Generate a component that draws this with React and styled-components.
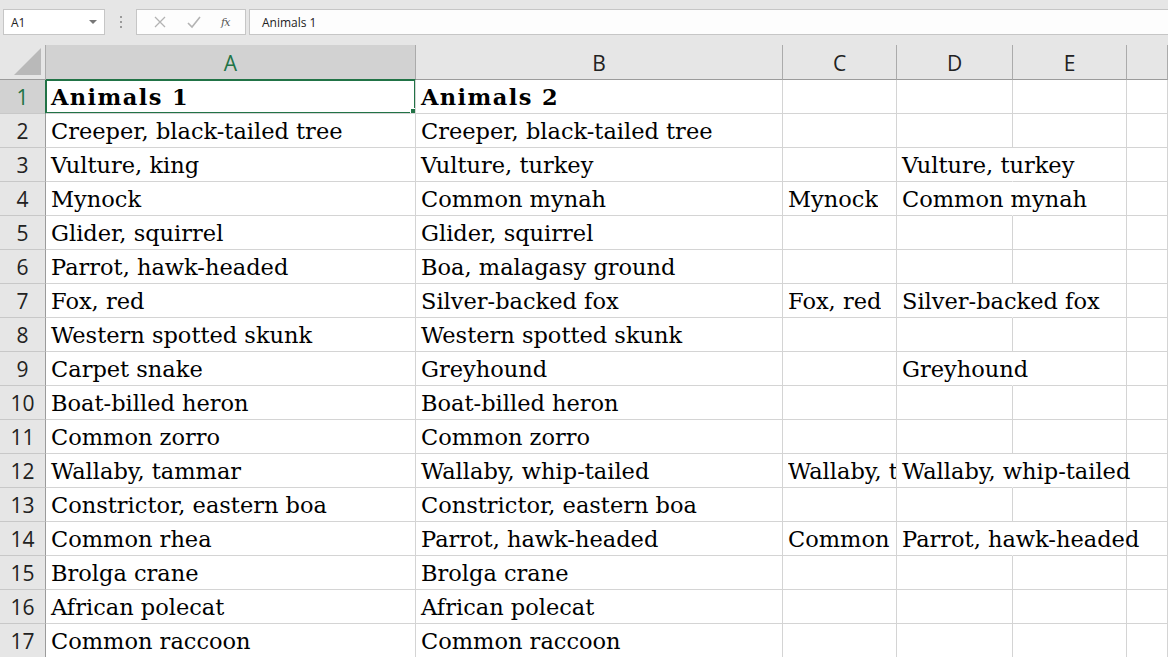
import React from 'react'
import styled, { createGlobalStyle } from 'styled-components'

const Global = createGlobalStyle`
  html, body { margin: 0; padding: 0; background: #ffffff; overflow: hidden; }
  * { box-sizing: border-box; }
`

const COLS = '46px 370px 367px 114px 116px 114px 1fr'
const UI_FONT = `"Open Sans", "Noto Sans", "DejaVu Sans", sans-serif`
const CELL_FONT = `"DejaVu Serif", "Liberation Serif", serif`

const Page = styled.div`
  width: 1168px;
  height: 657px;
  display: flex;
  flex-direction: column;
  overflow: hidden;
`

const Toolbar = styled.div`
  height: 45px;
  flex: none;
  display: flex;
  align-items: flex-start;
  padding: 9px 0 0 3px;
  background: #e6e6e6;
`

const NameBox = styled.div`
  width: 102px;
  height: 26px;
  display: flex;
  align-items: center;
  justify-content: space-between;
  padding: 0 7px 0 7px;
  background: #ffffff;
  border: 1px solid #c6c6c6;
  font-family: ${UI_FONT};
  font-size: 12px;
  color: #222;
`

const Caret = styled.span`
  width: 0;
  height: 0;
  border-left: 4px solid transparent;
  border-right: 4px solid transparent;
  border-top: 4px solid #777;
`

const Grip = styled.div`
  width: 31px;
  height: 26px;
  display: flex;
  flex-direction: column;
  align-items: center;
  justify-content: center;
  gap: 3px;
  span {
    width: 2px;
    height: 2px;
    background: #9a9a9a;
  }
`

const FxGroup = styled.div`
  width: 110px;
  height: 26px;
  display: flex;
  align-items: center;
  justify-content: space-around;
  padding: 0 6px;
  background: #fdfdfd;
  border: 1px solid #c6c6c6;
`

const Fx = styled.span`
  font-family: "DejaVu Serif", serif;
  font-style: italic;
  font-size: 11px;
  color: #555;
  letter-spacing: -1px;
`

const FormulaInput = styled.div`
  flex: 1;
  height: 26px;
  margin-left: 3px;
  display: flex;
  align-items: center;
  padding-left: 12px;
  background: #fdfdfd;
  border: 1px solid #c6c6c6;
  border-right: none;
  font-family: ${UI_FONT};
  font-size: 12px;
  color: #222;
`

const Sheet = styled.div`
  display: flex;
  flex-direction: column;
`

const Row = styled.div`
  display: grid;
  grid-template-columns: ${COLS};
  height: ${p => p.$h}px;
`

const Corner = styled.div`
  position: relative;
  background: #e6e6e6;
  border-right: 1px solid #ababab;
  border-bottom: 1px solid #9b9b9b;
  &::after {
    content: '';
    position: absolute;
    right: 4px;
    bottom: 4px;
    border-left: 27px solid transparent;
    border-bottom: 27px solid #b9b9b9;
  }
`

const ColHead = styled.div`
  display: flex;
  align-items: center;
  justify-content: center;
  padding-top: 1px;
  background: ${p => (p.$active ? '#d2d2d2' : '#e6e6e6')};
  color: ${p => (p.$active ? '#217346' : '#222')};
  border-right: 1px solid #ababab;
  border-bottom: 1px solid ${p => (p.$active ? '#217346' : '#9b9b9b')};
  font-family: ${UI_FONT};
  font-size: 21px;
`

const RowHead = styled.div`
  display: flex;
  align-items: center;
  justify-content: center;
  background: ${p => (p.$active ? '#d2d2d2' : '#e6e6e6')};
  color: ${p => (p.$active ? '#217346' : '#222')};
  border-right: 1px solid ${p => (p.$active ? '#217346' : '#9b9b9b')};
  border-bottom: 1px solid #c8c8c8;
  font-family: ${UI_FONT};
  font-size: 21px;
`

const Cell = styled.div`
  position: relative;
  display: flex;
  align-items: flex-end;
  min-width: 0;
  padding: 0 0 3px 5px;
  border-right: 1px solid ${p => (p.$spill ? 'transparent' : '#d4d4d4')};
  border-bottom: 1px solid #d4d4d4;
  overflow: ${p => (p.$spill ? 'visible' : 'hidden')};
  white-space: nowrap;
  z-index: ${p => (p.$spill ? 1 : 0)};
  font-family: ${CELL_FONT};
  font-size: 22.5px;
  font-weight: ${p => (p.$bold ? 700 : 400)};
  letter-spacing: ${p => (p.$bold ? '1.4px' : '0')};
  color: #000;
`

const Clip = styled.span`
  display: block;
  overflow: hidden;
  max-width: 100%;
`

const Selection = styled.div`
  position: absolute;
  left: -1px;
  top: -1px;
  right: -1px;
  bottom: -1px;
  border: 2px solid #217346;
  pointer-events: none;
  &::after {
    content: '';
    position: absolute;
    right: -5px;
    bottom: -5px;
    width: 7px;
    height: 7px;
    background: #217346;
    border: 1px solid #fff;
  }
`

const rows = [
  ['Animals 1', 'Animals 2', '', ''],
  ['Creeper, black-tailed tree', 'Creeper, black-tailed tree', '', ''],
  ['Vulture, king', 'Vulture, turkey', '', 'Vulture, turkey'],
  ['Mynock', 'Common mynah', 'Mynock', 'Common mynah'],
  ['Glider, squirrel', 'Glider, squirrel', '', ''],
  ['Parrot, hawk-headed', 'Boa, malagasy ground', '', ''],
  ['Fox, red', 'Silver-backed fox', 'Fox, red', 'Silver-backed fox'],
  ['Western spotted skunk', 'Western spotted skunk', '', ''],
  ['Carpet snake', 'Greyhound', '', 'Greyhound'],
  ['Boat-billed heron', 'Boat-billed heron', '', ''],
  ['Common zorro', 'Common zorro', '', ''],
  ['Wallaby, tammar', 'Wallaby, whip-tailed', 'Wallaby, tammar', 'Wallaby, whip-tailed'],
  ['Constrictor, eastern boa', 'Constrictor, eastern boa', '', ''],
  ['Common rhea', 'Parrot, hawk-headed', 'Common rhea', 'Parrot, hawk-headed'],
  ['Brolga crane', 'Brolga crane', '', ''],
  ['African polecat', 'African polecat', '', ''],
  ['Common raccoon', 'Common raccoon', '', ''],
]

const letters = ['A', 'B', 'C', 'D', 'E', '']

export default function App() {
  return (
    <Page>
      <Global />
      <Toolbar>
        <NameBox>
          A1
          <Caret />
        </NameBox>
        <Grip>
          <span />
          <span />
          <span />
        </Grip>
        <FxGroup>
          <svg width="14" height="14" viewBox="0 0 14 14">
            <path d="M2 2 L12 12 M12 2 L2 12" stroke="#b3b3b3" strokeWidth="1.3" fill="none" />
          </svg>
          <svg width="16" height="14" viewBox="0 0 16 14">
            <path d="M2 8 L6 12 L14 2" stroke="#b3b3b3" strokeWidth="1.6" fill="none" />
          </svg>
          <Fx>fx</Fx>
        </FxGroup>
        <FormulaInput>Animals 1</FormulaInput>
      </Toolbar>
      <Sheet>
        <Row $h={35}>
          <Corner />
          {letters.map((l, i) => (
            <ColHead key={i} $active={l === 'A'}>
              {l}
            </ColHead>
          ))}
        </Row>
        {rows.map((r, i) => (
          <Row key={i} $h={34}>
            <RowHead $active={i === 0}>{i + 1}</RowHead>
            <Cell $bold={i === 0}>
              {r[0]}
              {i === 0 && <Selection />}
            </Cell>
            <Cell $bold={i === 0}>{r[1]}</Cell>
            <Cell>{r[2] && <Clip>{r[2]}</Clip>}</Cell>
            <Cell $spill={r[3] !== ''}>{r[3]}</Cell>
            <Cell />
            <Cell />
          </Row>
        ))}
      </Sheet>
    </Page>
  )
}
